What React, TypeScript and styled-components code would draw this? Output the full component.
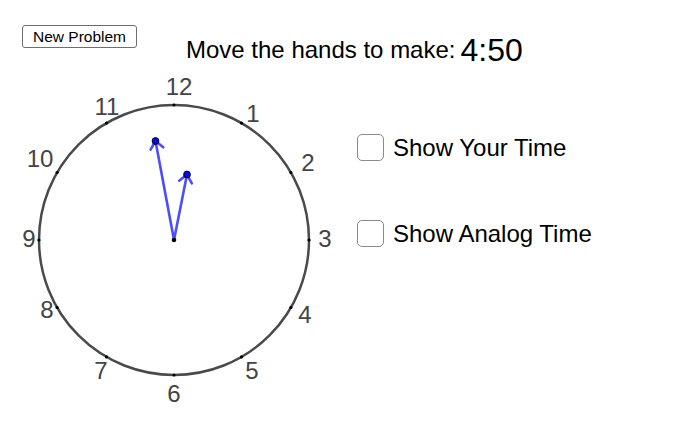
import styled, { createGlobalStyle } from "styled-components"

const GlobalStyle = createGlobalStyle`
  html, body {
    margin: 0;
    padding: 0;
    background: #fff;
  }
  body {
    font-family: "Liberation Sans", Arial, sans-serif;
    color: #000;
  }
`

const CX = 174
const CY = 240
const R = 135

// label centres measured against the page
const numbers: [string, number, number][] = [
  ["12", 179, 86],
  ["1", 253, 113],
  ["2", 308, 162],
  ["3", 325, 238],
  ["4", 305, 314],
  ["5", 252, 370],
  ["6", 174, 393],
  ["7", 101, 370],
  ["8", 47, 309],
  ["9", 29, 238],
  ["10", 40, 158],
  ["11", 107, 106],
]

const hands: [number, number][] = [
  [155.5, 141],
  [187, 174.5],
]

const arrowArms = (tx: number, ty: number) => {
  const dx = CX - tx
  const dy = CY - ty
  const len = Math.hypot(dx, dy)
  const ux = dx / len
  const uy = dy / len
  const a = (40 * Math.PI) / 180
  const arm = 10
  const rot = (s: number) => [
    tx + arm * (ux * Math.cos(s * a) - uy * Math.sin(s * a)),
    ty + arm * (ux * Math.sin(s * a) + uy * Math.cos(s * a)),
  ]
  return [rot(1), rot(-1)]
}

const Clock = () => (
  <ClockSvg width={345} height={350} viewBox="0 70 345 350">
    <circle cx={CX} cy={CY} r={R} fill="none" stroke="#4a4a4a" strokeWidth={2.5} />
    {numbers.map((_, i) => {
      const ang = (i * 30 * Math.PI) / 180
      return (
        <circle
          key={"t" + i}
          cx={CX + R * Math.sin(ang)}
          cy={CY - R * Math.cos(ang)}
          r={1.6}
          fill="#000"
        />
      )
    })}
    {numbers.map(([n, x, y]) => (
      <text
        key={n}
        x={x}
        y={y + 8.5}
        textAnchor="middle"
        fontSize={24}
        fill="#444"
        fontFamily='"Liberation Sans", Arial, sans-serif'
      >
        {n}
      </text>
    ))}
    {hands.map(([tx, ty], i) => {
      const [p1, p2] = arrowArms(tx, ty)
      return (
        <g key={"h" + i} stroke="#4d4dff" strokeWidth={2.6} strokeLinecap="round" fill="none">
          <line x1={CX} y1={CY} x2={tx} y2={ty} />
          <polyline points={`${p1[0]},${p1[1]} ${tx},${ty} ${p2[0]},${p2[1]}`} />
        </g>
      )
    })}
    {hands.map(([tx, ty], i) => (
      <circle key={"d" + i} cx={tx} cy={ty} r={3.4} fill="#0a0ae0" stroke="#000" strokeWidth={0.9} />
    ))}
    <circle cx={CX} cy={CY} r={2.3} fill="#000" />
  </ClockSvg>
)

const Option = ({ label }: { label: string }) => (
  <OptionRow>
    <Box />
    <OptionLabel>{label}</OptionLabel>
  </OptionRow>
)

export default function App() {
  return (
    <Page>
      <GlobalStyle />
      <Header>
        <Button>New Problem</Button>
        <Prompt>
          Move the hands to make:
          <Target>4:50</Target>
        </Prompt>
      </Header>
      <Body>
        <Clock />
        <Options>
          <Option label="Show Your Time" />
          <Option label="Show Analog Time" />
        </Options>
      </Body>
    </Page>
  )
}

const Page = styled.div`
  width: 696px;
  height: 432px;
  overflow: hidden;
  display: flex;
  flex-direction: column;
`

const Header = styled.div`
  height: 70px;
  box-sizing: border-box;
  padding: 25px 0 0 22px;
  display: flex;
  align-items: flex-start;
`

const Button = styled.button`
  width: 115px;
  height: 23px;
  padding: 0;
  margin: 0 49px 0 0;
  border: 1px solid #6e6e6e;
  border-radius: 3px;
  background: #fff;
  font-family: "Liberation Sans", Arial, sans-serif;
  font-size: 15.5px;
  color: #000;
`

const Prompt = styled.div`
  margin-top: 4px;
  display: flex;
  align-items: baseline;
  font-size: 24px;
  white-space: nowrap;
`

const Target = styled.span`
  margin-left: 5px;
  font-size: 32px;
  position: relative;
  top: 3px;
`

const Body = styled.div`
  display: flex;
  align-items: flex-start;
`

const ClockSvg = styled.svg`
  display: block;
  flex-shrink: 0;
`

const Options = styled.div`
  margin-left: 12px;
  padding-top: 63px;
  display: flex;
  flex-direction: column;
  gap: 58px;
`

const OptionRow = styled.div`
  display: flex;
  align-items: center;
  gap: 9px;
`

const Box = styled.div`
  width: 27px;
  height: 27px;
  box-sizing: border-box;
  border: 1px solid #8a8a8a;
  border-radius: 5px;
  background: #fff;
`

const OptionLabel = styled.span`
  font-size: 24px;
  color: #000;
  white-space: nowrap;
  position: relative;
  top: 1px;
`
